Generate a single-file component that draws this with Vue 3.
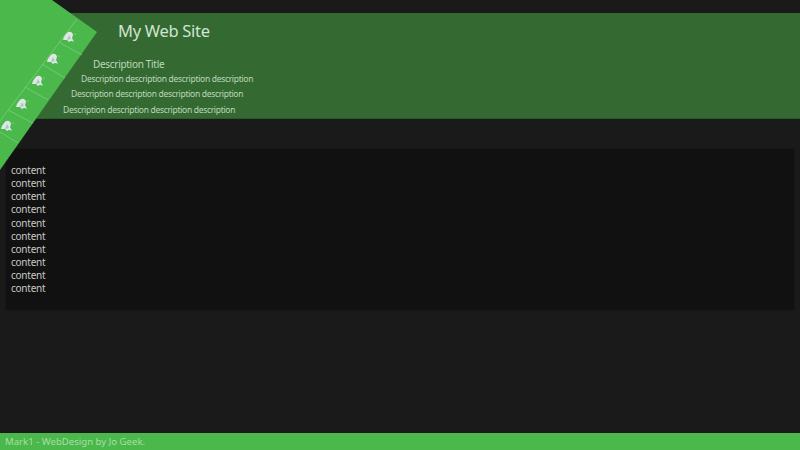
<script setup>
const descriptions = [
  { text: 'Description description description description', cls: 'd1' },
  { text: 'Description description description description', cls: 'd2' },
  { text: 'Description description description description', cls: 'd3' },
]
const lines = Array.from({ length: 10 }, () => 'content')
const birds = [[69, 37], [53, 59], [38, 81], [22, 104], [7, 126]]
const cuts = [
  [59, 42, 82, 55], [42, 64, 65, 78], [25, 87, 48, 100], [8, 110, 33, 123], [0, 132, 18, 143],
]
</script>

<template>
  <div class="page">
    <header class="header">
      <h1 class="site">My Web Site</h1>
      <h2 class="dtitle">Description Title</h2>
      <p v-for="(d, i) in descriptions" :key="i" class="desc" :class="d.cls">{{ d.text }}</p>
    </header>
    <main class="box">
      <div v-for="(l, i) in lines" :key="i" class="line">{{ l }}</div>
    </main>
    <footer class="footer">Mark1 - WebDesign by Jo Geek.</footer>
    <svg class="ribbon" width="100" height="172" viewBox="0 0 100 172">
      <polygon points="0,0 52,0 97,32 0,170" fill="#4ab84a" />
      <line x1="77" y1="19" x2="0" y2="121" class="rule" />
      <line v-for="(c, i) in cuts" :key="i" :x1="c[0]" :y1="c[1]" :x2="c[2]" :y2="c[3]" class="rule" />
      <g v-for="(b, i) in birds" :key="i" :transform="`translate(${b[0]} ${b[1]})`">
        <path d="M-6 3 Q-5 -1 -3 -3 Q-1 -6 2 -5 Q4 -4 4 -2 L3 1 L5 5 Q2 3 0 5 L-2 3 Z" fill="#dde8e6" />
        <path d="M-2 3 L0 -2 L2 2 Z" fill="#a9c8bd" />
        <circle cx="6" cy="-3" r="0.6" fill="#bfe3bf" />
      </g>
    </svg>
  </div>
</template>

<style>
html, body { margin: 0; background: #1a1a1a; }
</style>

<style scoped>
.page {
  position: relative;
  width: 800px;
  height: 450px;
  overflow: hidden;
  background: #1a1a1a;
  display: flex;
  flex-direction: column;
  font-family: "Noto Sans", "Open Sans", sans-serif;
}
.header {
  margin-top: 13px;
  height: 106px;
  flex: none;
  box-sizing: border-box;
  background: #346a31;
  border-bottom: 1px solid #2a5a28;
  color: #bcd8bb;
  overflow: hidden;
}
.site {
  margin: 7px 0 0 118px;
  font-size: 16.5px;
  letter-spacing: -0.3px;
  line-height: 22px;
  font-weight: 400;
  color: #d0e4cf;
}
.dtitle {
  margin: 15px 0 0 93px;
  font-size: 10px;
  letter-spacing: -0.3px;
  line-height: 14px;
  font-weight: 400;
}
.desc {
  margin: 0;
  font-size: 8.5px;
  letter-spacing: -0.31px;
  line-height: 15.3px;
}
.d1 { margin-left: 81px; }
.d2 { margin-left: 71px; }
.d3 { margin-left: 63px; }
.box {
  margin: 29px 5px 0;
  height: 163px;
  flex: none;
  box-sizing: border-box;
  padding: 15px 5px 0;
  background: #111;
  border: 1px solid #161616;
  color: #c8c8c8;
}
.line {
  font-size: 10px;
  letter-spacing: -0.25px;
  line-height: 13.12px;
}
.footer {
  margin-top: auto;
  height: 17px;
  box-sizing: border-box;
  padding-left: 5px;
  background: #4ab84a;
  color: #a9dfa9;
  font-size: 9.6px;
  line-height: 17px;
}
.ribbon {
  position: absolute;
  left: 0;
  top: 0;
}
.rule {
  stroke: #86d086;
  stroke-width: 0.7;
}
</style>
